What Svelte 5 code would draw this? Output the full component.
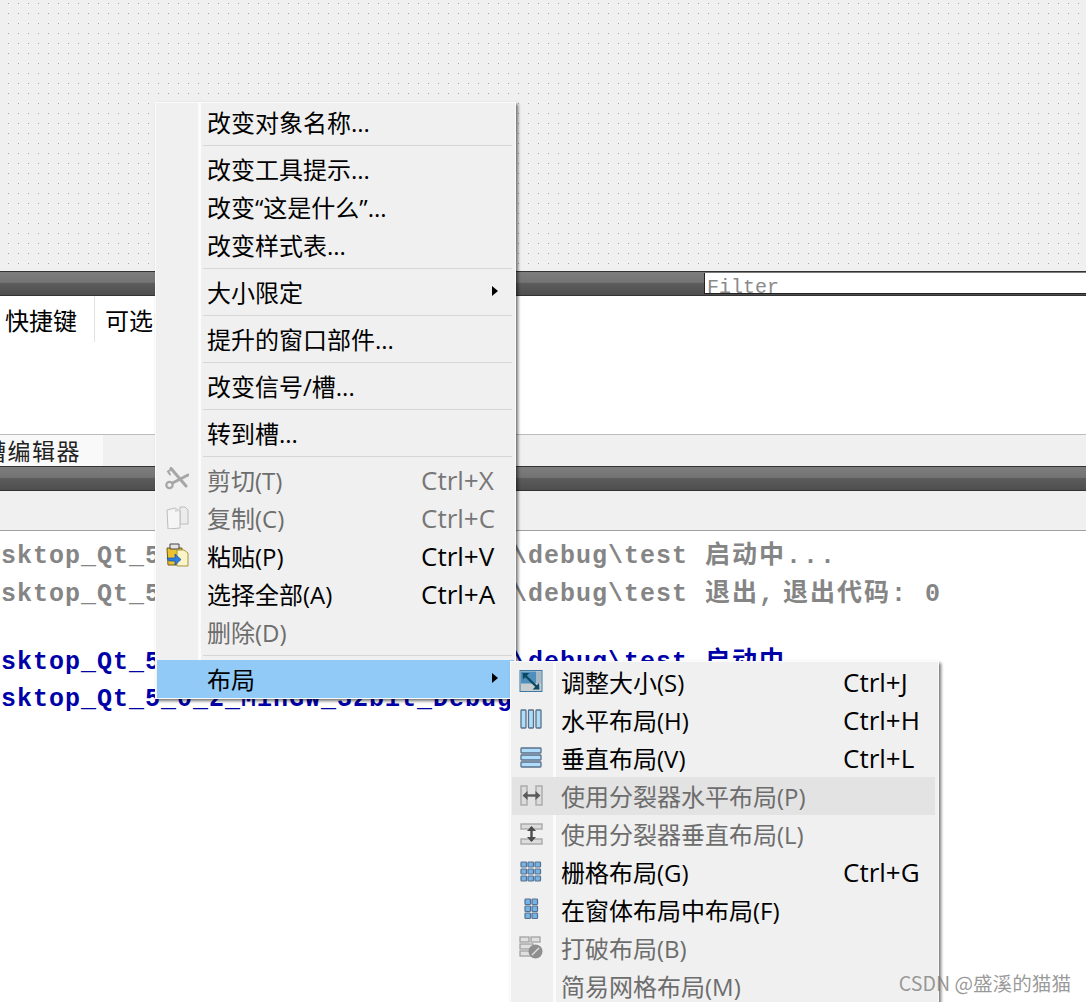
<script lang="ts">
	interface Item {
		label?: string;
		key?: string;
		off?: boolean;
		sep?: boolean;
		sub?: boolean;
		icon?: string;
		hover?: boolean;
	}

	const mainMenu: Item[] = [
		{ label: '改变对象名称...' },
		{ sep: true },
		{ label: '改变工具提示...' },
		{ label: '改变“这是什么”...' },
		{ label: '改变样式表...' },
		{ sep: true },
		{ label: '大小限定', sub: true },
		{ sep: true },
		{ label: '提升的窗口部件...' },
		{ sep: true },
		{ label: '改变信号/槽...' },
		{ sep: true },
		{ label: '转到槽...' },
		{ sep: true },
		{ label: '剪切(T)', key: 'Ctrl+X', off: true, icon: 'cut' },
		{ label: '复制(C)', key: 'Ctrl+C', off: true, icon: 'copy' },
		{ label: '粘贴(P)', key: 'Ctrl+V', icon: 'paste' },
		{ label: '选择全部(A)', key: 'Ctrl+A' },
		{ label: '删除(D)', off: true },
		{ sep: true },
		{ label: '布局', sub: true, hover: true }
	];

	const layoutMenu: Item[] = [
		{ label: '调整大小(S)', key: 'Ctrl+J', icon: 'resize' },
		{ label: '水平布局(H)', key: 'Ctrl+H', icon: 'hbox' },
		{ label: '垂直布局(V)', key: 'Ctrl+L', icon: 'vbox' },
		{ label: '使用分裂器水平布局(P)', off: true, icon: 'hsplit', hover: true },
		{ label: '使用分裂器垂直布局(L)', off: true, icon: 'vsplit' },
		{ label: '栅格布局(G)', key: 'Ctrl+G', icon: 'grid' },
		{ label: '在窗体布局中布局(F)', icon: 'form' },
		{ label: '打破布局(B)', off: true, icon: 'break' },
		{ label: '简易网格布局(M)', off: true }
	];

	const logLines = [
		{ left: 'sktop_Qt_5', right: '\\debug\\test', msg: '启动中...', cls: 'grey' },
		{ left: 'sktop_Qt_5', right: '\\debug\\test', msg: '退出,\u2009退出代码: 0', cls: 'grey' },
		{ left: '', right: '', msg: '', cls: 'gap' },
		{ left: 'sktop_Qt_5', right: '\\debug\\test', msg: '启动中...', cls: 'blue' },
		{ left: 'sktop_Qt_5_0_2_MinGW_32bit_Debug', right: '', msg: '', cls: 'blue' }
	];
</script>

{#snippet icon(name: string)}
	<svg class="ico" viewBox="0 0 24 24" width="24" height="24" aria-hidden="true">
		{#if name === 'cut'}
			<g fill="none" stroke="#a6a6a6" stroke-linecap="round">
				<path d="M6 1.500 21 19" stroke-width="3" />
				<path d="M7.500 16 23 8" stroke-width="3" />
				<circle cx="4.500" cy="18" r="3.200" stroke-width="2.200" />
				<path d="M7 2 3 4.500 5 7.500" stroke-width="2" />
			</g>
		{:else if name === 'copy'}
			<path d="M15 2h5l3 3v14h-8z" fill="#ececec" stroke="#bcbcbc" />
			<path d="M2 5l8-2 5 3v17l-12 1z" fill="#f5f5f5" stroke="#bcbcbc" />
			<path d="M10 3v4l5-1z" fill="#d8d8d8" />
		{:else if name === 'paste'}
			<path d="M2 5h15v17H3z" fill="#ecc22e" stroke="#6e5a18" />
			<path d="M5 1h9v5H5z" fill="#e4e4e4" stroke="#444" />
			<path d="M12 7h7l4 3v13H12z" fill="#fbf4c8" stroke="#a5953c" />
			<path d="M2 15h8v-4l6 5.500-6 5.500v-4H4z" fill="#2d7fe0" stroke="#174f9e" stroke-width=".7" />
		{:else if name === 'resize'}
			<rect x="1" y="1.500" width="22" height="21" fill="#c8ced0" stroke="#3f78a4" />
			<rect x="2" y="2.500" width="15" height="12" fill="#4f8fbe" />
			<rect x="17" y="2.500" width="5" height="12" fill="#a8b8c4" />
			<path d="M5 5.500 19 19" fill="none" stroke="#0b4a62" stroke-width="2.400" />
			<path d="M3.500 4h7L4 10.500zM20.500 20.500h-7l6.500-6.500z" fill="#0b4a62" />
		{:else if name === 'hbox'}
			<g fill="#aedcf9" stroke="#58708a" stroke-width="1.300">
				<rect x="2" y="3" width="5" height="18" rx=".8" />
				<rect x="9.500" y="3" width="5" height="18" rx=".8" />
				<rect x="17" y="3" width="5" height="18" rx=".8" />
			</g>
		{:else if name === 'vbox'}
			<g fill="#aedcf9" stroke="#58708a" stroke-width="1.300">
				<rect x="2" y="3" width="20" height="5" rx=".8" />
				<rect x="2" y="10" width="20" height="5" rx=".8" />
				<rect x="2" y="17" width="20" height="5" rx=".8" />
			</g>
		{:else if name === 'hsplit'}
			<g fill="#dcdcdc" stroke="#a8a8a8" stroke-width="1.400">
				<rect x="2" y="3" width="6" height="19" />
				<rect x="17" y="3" width="6" height="19" />
			</g>
			<path d="M5 12.500h15" stroke="#5a5a5a" stroke-width="2.400" />
			<path d="M8.500 8 3.500 12.500 8.500 17zM16.500 8l5 4.500-5 4.500z" fill="#5a5a5a" />
		{:else if name === 'vsplit'}
			<g fill="#dcdcdc" stroke="#a8a8a8" stroke-width="1.400">
				<rect x="2" y="3" width="21" height="5" />
				<rect x="2" y="18" width="21" height="5" />
			</g>
			<path d="M12.500 6v14" stroke="#4c4c4c" stroke-width="2.400" />
			<path d="M8 10l4.500-5 4.500 5zM8 16l4.500 5 4.500-5z" fill="#4c4c4c" />
		{:else if name === 'grid'}
			<g fill="#74b4e8" stroke="#566f8c" stroke-width="1.200">
				{#each [3, 10, 17] as y}
					{#each [2, 9, 16] as x}
						<rect {x} {y} width="5.500" height="5" rx=".8" />
					{/each}
				{/each}
			</g>
		{:else if name === 'form'}
			<g fill="#74b4e8" stroke="#566f8c" stroke-width="1.200">
				{#each [2, 9, 16] as y}
					{#each [6, 13] as x}
						<rect {x} {y} width="5.500" height="5.500" rx=".8" />
					{/each}
				{/each}
			</g>
		{:else if name === 'break'}
			<g fill="#e0e0e0" stroke="#9c9c9c" stroke-width="1.200">
				<rect x="1" y="2" width="9" height="5" />
				<rect x="12" y="2" width="9" height="5" />
				<rect x="1" y="9" width="13" height="5" />
				<rect x="1" y="16" width="13" height="5" />
			</g>
			<circle cx="16.500" cy="16.500" r="7" fill="#8e8e8e" />
			<path d="M13 20l7-7" stroke="#dedede" stroke-width="1.500" />
		{/if}
	</svg>
{/snippet}

{#snippet menu(items: Item[])}
	{#each items as it}
		{#if it.sep}
			<div class="sep"></div>
		{:else}
			<div class="item" class:off={it.off} class:hover={it.hover}>
				<span class="gutter">
					{#if it.icon}{@render icon(it.icon)}{/if}
				</span>
				<span class="label">{it.label}</span>
				{#if it.key}<span class="key">{it.key}</span>{/if}
				{#if it.sub}<span class="arrow"></span>{/if}
			</div>
		{/if}
	{/each}
{/snippet}

<div class="page">
	<div class="canvas"></div>

	<div class="dock-bar">
		<input class="filter" placeholder="Filter" readonly />
	</div>
	<div class="table-head">
		<span class="col first">快捷键</span>
		<span class="col">可选中</span>
	</div>

	<div class="tabs"><span class="tab">槽编辑器</span></div>
	<div class="dock-bar low"></div>
	<div class="toolbar"></div>

	<div class="log">
		{#each logLines as line}
			<div class="line {line.cls}">
				<span class="left">{line.left}</span>
				{#if line.right}
					<span class="right">{line.right}</span>
					<span class="msg">{line.msg}</span>
				{/if}
			</div>
		{/each}
	</div>

	<div class="menu main">{@render menu(mainMenu)}</div>
	<div class="menu layout">{@render menu(layoutMenu)}</div>
	<div class="mark">CSDN @盛溪的猫猫</div>
</div>

<style>
	:global(body) {
		margin: 0;
		background: #fff;
	}

	.page {
		position: relative;
		width: 1086px;
		height: 1002px;
		overflow: hidden;
		font-family: 'Noto Sans CJK SC', 'Liberation Sans', sans-serif;
		color: #000;
	}

	.canvas {
		height: 271px;
		background-color: #f0f0f0;
		background-image: radial-gradient(circle at 0.5px 0.5px, #a4a4a4 0.5px, transparent 0.9px);
		background-size: 10px 10px;
		background-position: 8px 3px;
	}

	.dock-bar {
		height: 23px;
		border-top: 1px solid #333;
		border-bottom: 1px solid #333;
		background: linear-gradient(#7c7c7c, #747474 45%, #5c5c5c 50%, #4e4e4e);
		display: flex;
		justify-content: flex-end;
	}

	.filter {
		width: 382px;
		height: 21px;
		margin: 1px 0 0;
		padding: 8px 0 0 2px;
		border: 0;
		border-left: 1px solid #222;
		border-bottom: 1px solid #222;
		box-sizing: border-box;
		background: #fff;
		font: 20px/20px 'Liberation Mono', monospace;
		outline: none;
	}

	.filter::placeholder {
		color: #8a8a8a;
	}

	.table-head {
		height: 138px;
		background: #fff;
		border-bottom: 1px solid #bcbcbc;
		display: flex;
		align-items: flex-start;
		font-size: 24px;
		line-height: 48px;
	}

	.col {
		padding: 0 11px 0 10px;
		height: 46px;
		white-space: nowrap;
	}

	.col.first {
		width: 95px;
		box-sizing: border-box;
		padding-left: 5px;
		border-right: 1px solid #e2e2e2;
	}

	.tabs {
		height: 31px;
		background: #f0f0f0;
		overflow: hidden;
	}

	.tab {
		display: block;
		width: 103px;
		height: 31px;
		background: #f9f9f9;
		font-size: 23px;
		line-height: 31px;
		white-space: nowrap;
		text-indent: -17px;
		overflow: hidden;
		color: #222;
		letter-spacing: 1.500px;
	}

	.toolbar {
		height: 39px;
		background: #f0f0f0;
		border-bottom: 1px solid #a0a0a0;
	}

	.log {
		padding: 7px 0 0 1px;
		background: #fff;
		font: bold 25px/37.500px 'Liberation Mono', 'Noto Sans CJK SC', monospace;
		letter-spacing: 1px;
		white-space: pre;
	}

	.line {
		display: flex;
		height: 37.500px;
	}

	.line.gap {
		height: 30.500px;
	}

	.line.grey {
		color: #858585;
	}

	.line.blue {
		color: #0000a8;
	}

	.left {
		min-width: 511px;
	}

	.right {
		margin-right: 17px;
	}

	.msg {
		letter-spacing: 2px;
	}

	.menu {
		position: absolute;
		box-sizing: border-box;
		border: 1px solid #fbfbfb;
		box-shadow: 2px 2px 3px rgba(0, 0, 0, 0.55);
		font-family: 'Open Sans', 'Noto Sans CJK SC', sans-serif;
		font-size: 24px;
		background: linear-gradient(90deg, #f0f0f0 42px, #fbfbfb 42px, #fbfbfb 45px, #f0f0f0 45px);
	}

	.menu.main {
		left: 155px;
		top: 102px;
		width: 361px;
		padding: 0 1px;
	}

	.menu.layout {
		left: 510px;
		top: 661px;
		width: 429px;
		height: 360px;
		padding: 1px 3px 0 1px;
	}

	.item {
		display: flex;
		align-items: center;
		height: 38px;
		position: relative;
		white-space: nowrap;
	}

	.gutter {
		width: 50px;
		flex: none;
		display: flex;
		justify-content: center;
		padding-right: 10px;
		box-sizing: border-box;
	}

	.layout .gutter {
		width: 49px;
		padding-right: 11px;
	}

	.label {
		flex: 1;
		line-height: 38px;
		padding-top: 1px;
	}

	.key {
		font-size: 26px;
		margin-right: 20px;
		width: 73px;
	}

	.layout .key {
		margin-right: 19px;
	}

	.off {
		color: #6d6d6d;
	}

	.off .key {
		color: #777;
	}

	.item.hover {
		background: #91c9f7;
	}

	.layout .item.hover {
		background: #e3e3e3;
	}

	.arrow {
		position: absolute;
		right: 16px;
		top: 13px;
		border-left: 6px solid #000;
		border-top: 5px solid transparent;
		border-bottom: 5px solid transparent;
	}

	.sep {
		height: 1px;
		margin: 4px 2px 4px 46px;
		background: #d6d6d6;
	}

	.ico {
		display: block;
		margin-top: -2px;
	}

	.mark {
		position: absolute;
		right: 15px;
		bottom: 5px;
		font: 19.600px/28px 'Noto Sans CJK SC', sans-serif;
		color: rgba(120, 120, 120, 0.75);
	}
</style>
